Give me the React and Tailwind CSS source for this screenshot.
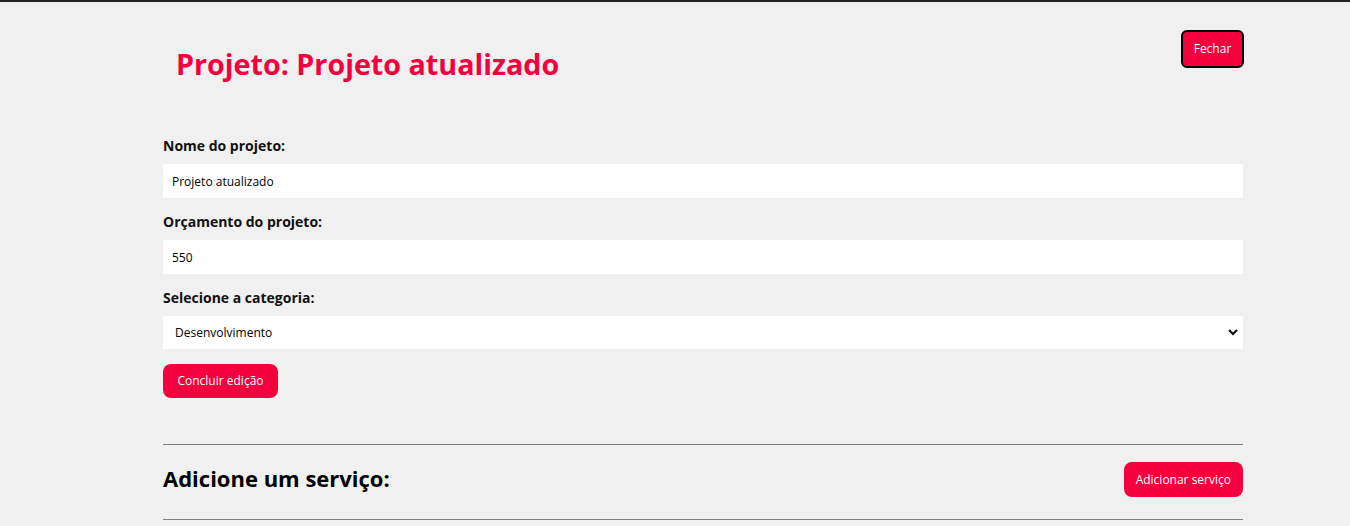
export default function App() {
  return (
    <div className="min-h-[526px] bg-[#f0f0f0] border-t-2 border-[#222222] font-['Open_Sans',sans-serif]">
      <div className="ml-[163px] w-[1080px]">
        {/* header */}
        <div className="flex justify-between items-start pt-[28px]">
          <h1 className="pl-[13px] pt-[14px] text-[28.7px] leading-[40px] font-bold text-[#f5003f]">
            Projeto: Projeto atualizado
          </h1>
          <button className="h-[38px] w-[63px] ml-auto mr-[-1px] bg-[#f5003f] text-white text-[12px] border-2 border-black rounded-[6px]">
            Fechar
          </button>
        </div>

        {/* edit form */}
        <form className="mt-[52px] flex flex-col">
          <label className="text-[14px] font-bold text-[#111] leading-[20px] mb-[8px]">Nome do projeto:</label>
          <input
            readOnly
            value="Projeto atualizado"
            className="h-[34px] bg-white px-[9px] text-[12px] text-black outline-none mb-[14px]"
          />
          <label className="text-[14px] font-bold text-[#111] leading-[20px] mb-[8px]">Orçamento do projeto:</label>
          <input
            readOnly
            value="550"
            className="h-[34px] bg-white px-[9px] text-[12px] text-black outline-none mb-[14px]"
          />
          <label className="text-[14px] font-bold text-[#111] leading-[20px] mb-[8px]">Selecione a categoria:</label>
          <div className="relative h-[33px] bg-white flex items-center">
            <span className="pl-[12px] text-[12px] text-black">Desenvolvimento</span>
            <svg className="absolute right-[4px] top-[11px]" width="12" height="10" viewBox="0 0 12 10">
              <path d="M2 3 L6 7 L10 3" fill="none" stroke="#111" strokeWidth="2.2" />
            </svg>
          </div>
          <div className="mt-[15px]">
            <button type="button" className="h-[34px] w-[115px] bg-[#f5003f] text-white text-[12px] rounded-[8px]">
              Concluir edição
            </button>
          </div>
        </form>

        {/* services */}
        <div className="mt-[46px] border-t border-[#808080]" />
        <div className="flex justify-between items-center h-[74px] pb-[5px]">
          <h2 className="text-[22px] font-bold text-black mb-[2px]">Adicione um serviço:</h2>
          <button className="h-[35px] px-[12px] bg-[#f5003f] text-white text-[12px] rounded-[8px]">
            Adicionar serviço
          </button>
        </div>
        <div className="border-t border-[#808080]" />
      </div>
    </div>
  );
}
